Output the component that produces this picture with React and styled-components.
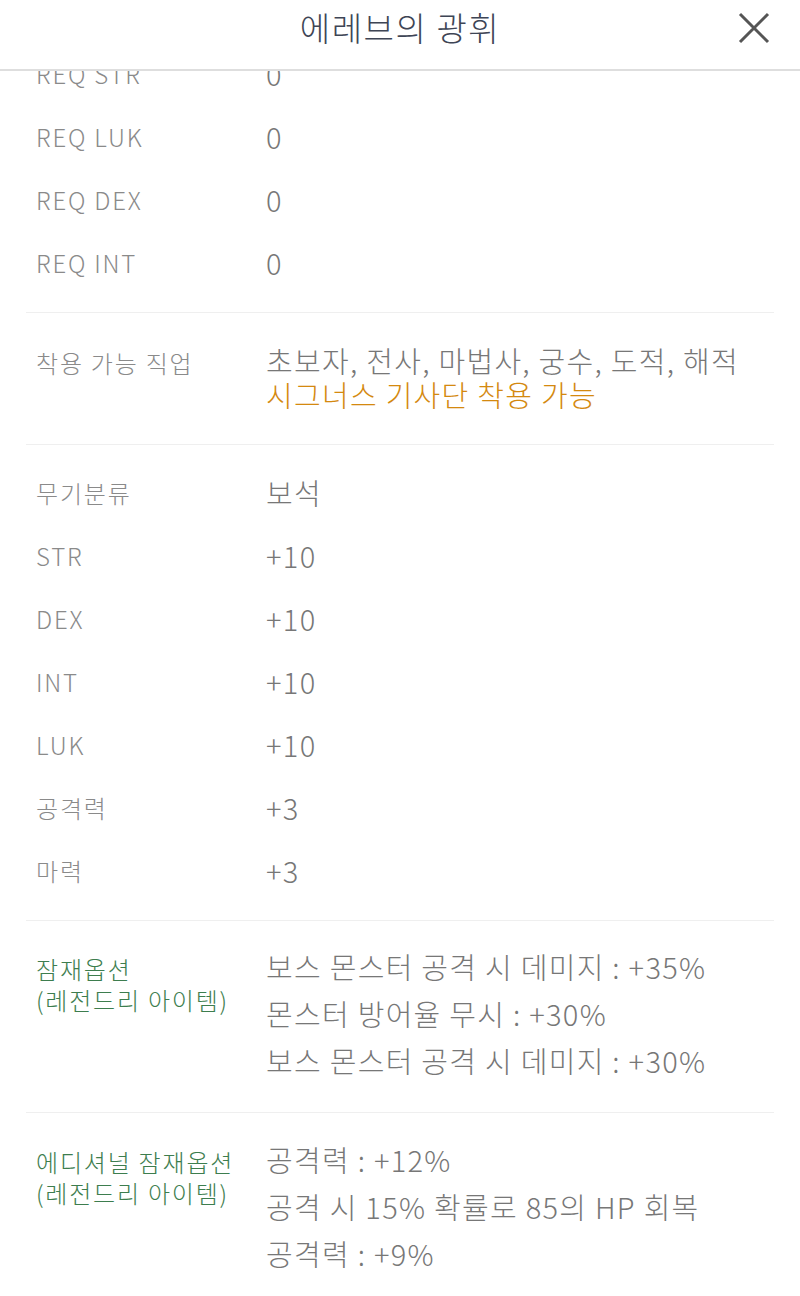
import styled, { createGlobalStyle } from "styled-components";

const GlobalStyle = createGlobalStyle`
  html, body {
    margin: 0;
    padding: 0;
    background: #fff;
  }
  body {
    font-family: "Noto Sans CJK KR", "Noto Sans", sans-serif;
    font-weight: 300;
  }
`;

const Screen = styled.div`
  width: 800px;
  height: 1296px;
  display: flex;
  flex-direction: column;
  overflow: hidden;
`;

const Header = styled.header`
  flex: 0 0 auto;
  height: 69px;
  border-bottom: 2px solid #dedede;
  display: flex;
  align-items: center;
  justify-content: center;
  position: relative;
  background: #fff;
  z-index: 1;

  h1 {
    margin: 0;
    margin-top: -16px;
    font-size: 33px;
    font-weight: 300;
    color: #3e4555;
    letter-spacing: 1.6px;
  }
`;

const CloseButton = styled.button`
  position: absolute;
  right: 28px;
  top: 10px;
  width: 36px;
  height: 36px;
  padding: 0;
  border: 0;
  background: none;
  cursor: pointer;
`;

const Body = styled.main`
  flex: 1 1 auto;
  overflow: hidden;
`;

/* list is scrolled a little: first row sits under the header */
const Scroller = styled.div`
  margin-top: -45px;
`;

const Section = styled.section`
  margin: 0 26px;
  padding: ${(p) => p.$top ?? 17}px 10px ${(p) => p.$bottom ?? 17}px;
  border-top: ${(p) => (p.$first ? "none" : "1.5px solid #efefef")};
`;

const StatRow = styled.div`
  display: grid;
  grid-template-columns: 230px 1fr;
  align-items: center;
  height: 63px;
`;

const OptionRow = styled.div`
  display: grid;
  grid-template-columns: 230px 1fr;
  align-items: baseline;
`;

const Label = styled.div`
  font-size: 24px;
  line-height: ${(p) => p.$lh || 31}px;
  color: ${(p) => (p.$green ? "#3d7d4e" : "#8a8a8a")};
  letter-spacing: 1.8px;
  margin-top: ${(p) => (p.$nudge ? "-3px" : "0")};
`;

const Value = styled.div`
  font-size: 29px;
  line-height: ${(p) => p.$lh || 40}px;
  color: #777;
  letter-spacing: 1.3px;
  margin-top: ${(p) => (p.$nudge ? "-4px" : "0")};
`;

const Line = styled.div`
  color: ${(p) => (p.$orange ? "#d4890f" : "#777")};
`;

const reqStats = [
  ["REQ STR", "0"],
  ["REQ LUK", "0"],
  ["REQ DEX", "0"],
  ["REQ INT", "0"],
];

const stats = [
  ["무기분류", "보석"],
  ["STR", "+10"],
  ["DEX", "+10"],
  ["INT", "+10"],
  ["LUK", "+10"],
  ["공격력", "+3"],
  ["마력", "+3"],
];

const potential = [
  "보스 몬스터 공격 시 데미지 : +35%",
  "몬스터 방어율 무시 : +30%",
  "보스 몬스터 공격 시 데미지 : +30%",
];

const additional = [
  "공격력 : +12%",
  "공격 시 15% 확률로 85의 HP 회복",
  "공격력 : +9%",
];

const CloseIcon = () => (
  <svg width="36" height="36" viewBox="0 0 36 36">
    <path d="M4 4 L32 32 M32 4 L4 32" stroke="#555" strokeWidth="3" fill="none" />
  </svg>
);

const StatSection = ({ items, first }) => (
  <Section $first={first}>
    {items.map(([k, v]) => (
      <StatRow key={k}>
        <Label $nudge>{k}</Label>
        <Value $nudge>{v}</Value>
      </StatRow>
    ))}
  </Section>
);

const OptionSection = ({ title, lines, top, bottom }) => (
  <Section $top={top} $bottom={bottom}>
    <OptionRow>
      <Label $green>
        {title.map((t) => (
          <div key={t}>{t}</div>
        ))}
      </Label>
      <Value $lh={47}>
        {lines.map((l, i) => (
          <Line key={i}>{l}</Line>
        ))}
      </Value>
    </OptionRow>
  </Section>
);

export default function App() {
  return (
    <>
      <GlobalStyle />
      <Screen>
        <Header>
          <h1>에레브의 광휘</h1>
          <CloseButton aria-label="닫기">
            <CloseIcon />
          </CloseButton>
        </Header>
        <Body>
          <Scroller>
            <StatSection items={reqStats} first />

            <Section $top={30} $bottom={33}>
              <OptionRow>
                <Label $lh={34}>착용 가능 직업</Label>
                <Value $lh={34}>
                  <Line>초보자, 전사, 마법사, 궁수, 도적, 해적</Line>
                  <Line $orange>시그너스 기사단 착용 가능</Line>
                </Value>
              </OptionRow>
            </Section>

            <StatSection items={stats} />

            <OptionSection
              title={["잠재옵션", "(레전드리 아이템)"]}
              lines={potential}
              top={22}
              bottom={28}
            />
            <OptionSection
              title={["에디셔널 잠재옵션", "(레전드리 아이템)"]}
              lines={additional}
              top={23}
              bottom={29}
            />
          </Scroller>
        </Body>
      </Screen>
    </>
  );
}
